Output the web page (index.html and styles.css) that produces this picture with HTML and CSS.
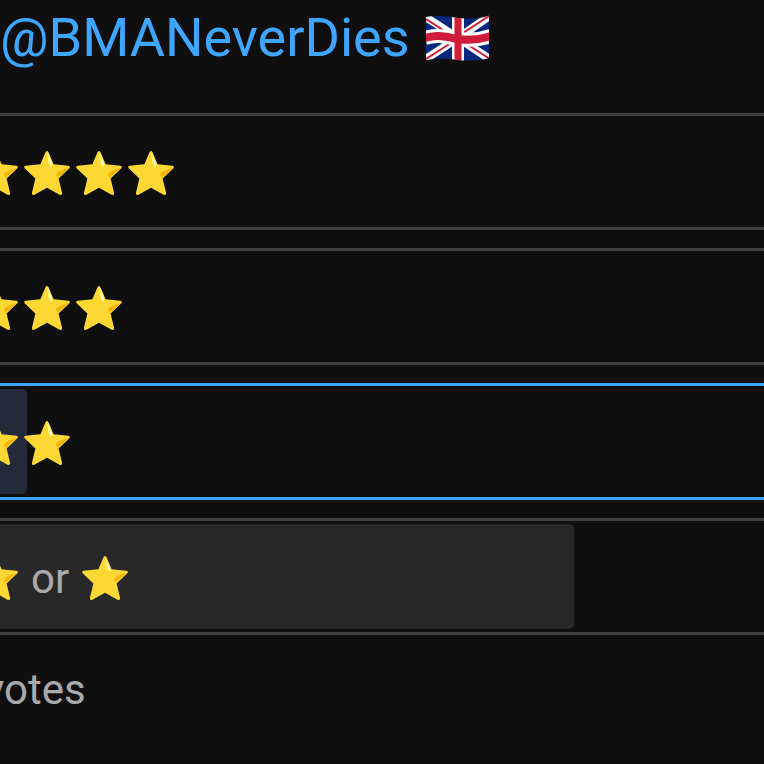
FILE: index.html
```html
<!DOCTYPE html>
<html lang="en">
<head>
    <meta charset="UTF-8">
    <meta name="viewport" content="width=device-width, initial-scale=1.0">
    <title>Poll</title>
    <link rel="stylesheet" href="styles.css">
</head>
<body>
    <!-- shared icons -->
    <svg class="sprite" aria-hidden="true">
        <symbol id="star" viewBox="0 0 52 52">
            <path d="M24.5 4.2Q26 1.6 27.5 4.2L32.6 16.3L47.4 17.8Q50 18.5 48.1 20.5L37.6 30.6L41.1 45Q41.2 47.7 38.6 46.7L26 39.7L13.4 46.7Q10.8 47.7 10.9 45L14.4 30.6L3.9 20.5Q2 18.5 4.6 17.8L19.4 16.3Z" fill="#fdd835"/>
            <path d="M26.2 5.5Q27.2 4.2 27.9 6.2L31.4 16.3Q31.6 19.8 29.3 18.2Q26.8 15.5 26.2 5.5Z" fill="#fff176"/>
            <path d="M28 9L31 16.5Q30.8 18.4 29.4 16.8Q28 14 28 9Z" fill="#fffde7"/>
            <path d="M47.7 20L37 29.2Q34.6 28 35.2 25.6Q40 21.8 47.7 20Z" fill="#f4b400"/>
        </symbol>
    </svg>

    <main class="post">
        <h1 class="title">
            <a href="#">@BMANeverDies</a>
            <svg class="flag" viewBox="0 0 64 46" role="img" aria-label="United Kingdom">
                <defs>
                    <clipPath id="wave">
                        <path d="M0 2C12 0 20 1 32 3C44 4 53 4 62 1Q63 0 63 2V43C52 46 43 46 32 45C20 43 12 43 1 45Q0 45 0 44Z"/>
                    </clipPath>
                </defs>
                <g clip-path="url(#wave)">
                    <path d="M0-2H64V48H0Z" fill="#05287f"/>
                    <path d="M-2 1L32 23L65 45M65 0L32 23L-2 45" fill="none" stroke="#fff" stroke-width="8"/>
                    <path d="M0 4L25 20M63 1L37 18M39 28L64 44M25 28L0 44" stroke="#d01c38" stroke-width="2"/>
                    <path d="M32-2V48" stroke="#fff" stroke-width="12"/>
                    <path d="M-1 23C12 19 20 22 32 24C44 26 53 25 65 21" fill="none" stroke="#fff" stroke-width="14"/>
                    <path d="M32-2V48" stroke="#d01c38" stroke-width="7"/>
                    <path d="M-1 23C12 19 20 22 32 24C44 26 53 25 65 21" fill="none" stroke="#d01c38" stroke-width="8"/>
                </g>
            </svg>
        </h1>

        <div class="poll">
            <button class="option" aria-label="5 stars">
                <svg class="star"><use href="#star"/></svg>
                <svg class="star"><use href="#star"/></svg>
                <svg class="star"><use href="#star"/></svg>
                <svg class="star"><use href="#star"/></svg>
                <svg class="star"><use href="#star"/></svg>
            </button>
            <button class="option" aria-label="4 stars">
                <svg class="star"><use href="#star"/></svg>
                <svg class="star"><use href="#star"/></svg>
                <svg class="star"><use href="#star"/></svg>
                <svg class="star"><use href="#star"/></svg>
            </button>
            <button class="option selected" aria-label="3 stars">
                <span class="track"><span class="fill" style="width: 14.2%"></span></span>
                <svg class="star"><use href="#star"/></svg>
                <svg class="star"><use href="#star"/></svg>
                <svg class="star"><use href="#star"/></svg>
            </button>
            <button class="option">
                <span class="track"><span class="fill" style="width: 69.4%"></span></span>
                <svg class="star"><use href="#star"/></svg>
                <svg class="star"><use href="#star"/></svg>
                <span class="or">or</span>
                <svg class="star"><use href="#star"/></svg>
            </button>
        </div>

        <p class="votes">votes</p>
    </main>
</body>
</html>
```

FILE: styles.css
```css
* {
    box-sizing: border-box;
}
body {
    margin: 0;
    background-color: #0f0f0f;
    color: #aaaaaa;
    font-family: Roboto, Arial, sans-serif;
    font-size: 42px;
    overflow: hidden;
}
.sprite {
    display: block;
    width: 0;
    height: 0;
}
.post {
    padding-top: 6px;
}
.title {
    display: flex;
    align-items: center;
    gap: 16px;
    margin: 0 0 43px;
    font-size: 54px;
    font-weight: 400;
    line-height: 64px;
}
.title a {
    color: #3ea6ff;
    text-decoration: none;
}
.flag {
    width: 64px;
    height: 46px;
}
/* the poll runs past both edges of the window */
.poll {
    display: flex;
    flex-direction: column;
    gap: 18px;
    margin: 0 -120px;
}
.option {
    position: relative;
    display: flex;
    align-items: center;
    padding: 32px 34px 27px;
    border: 3px solid #3f3f3f;
    border-radius: 8px;
    background: none;
    color: inherit;
    font: inherit;
    line-height: 52px;
    cursor: pointer;
}
.option.selected {
    border-color: #3ea6ff;
}
.track {
    position: absolute;
    inset: 3px;
}
.fill {
    display: block;
    height: 100%;
    border-radius: 5px;
    background-color: #282828;
}
.selected .fill {
    background-color: #252a3a;
}
.star {
    position: relative;
    width: 52px;
    height: 52px;
}
.or {
    position: relative;
    padding: 0 10px;
}
.votes {
    margin: 30px 0 0 -16px;
    line-height: 50px;
}
```
